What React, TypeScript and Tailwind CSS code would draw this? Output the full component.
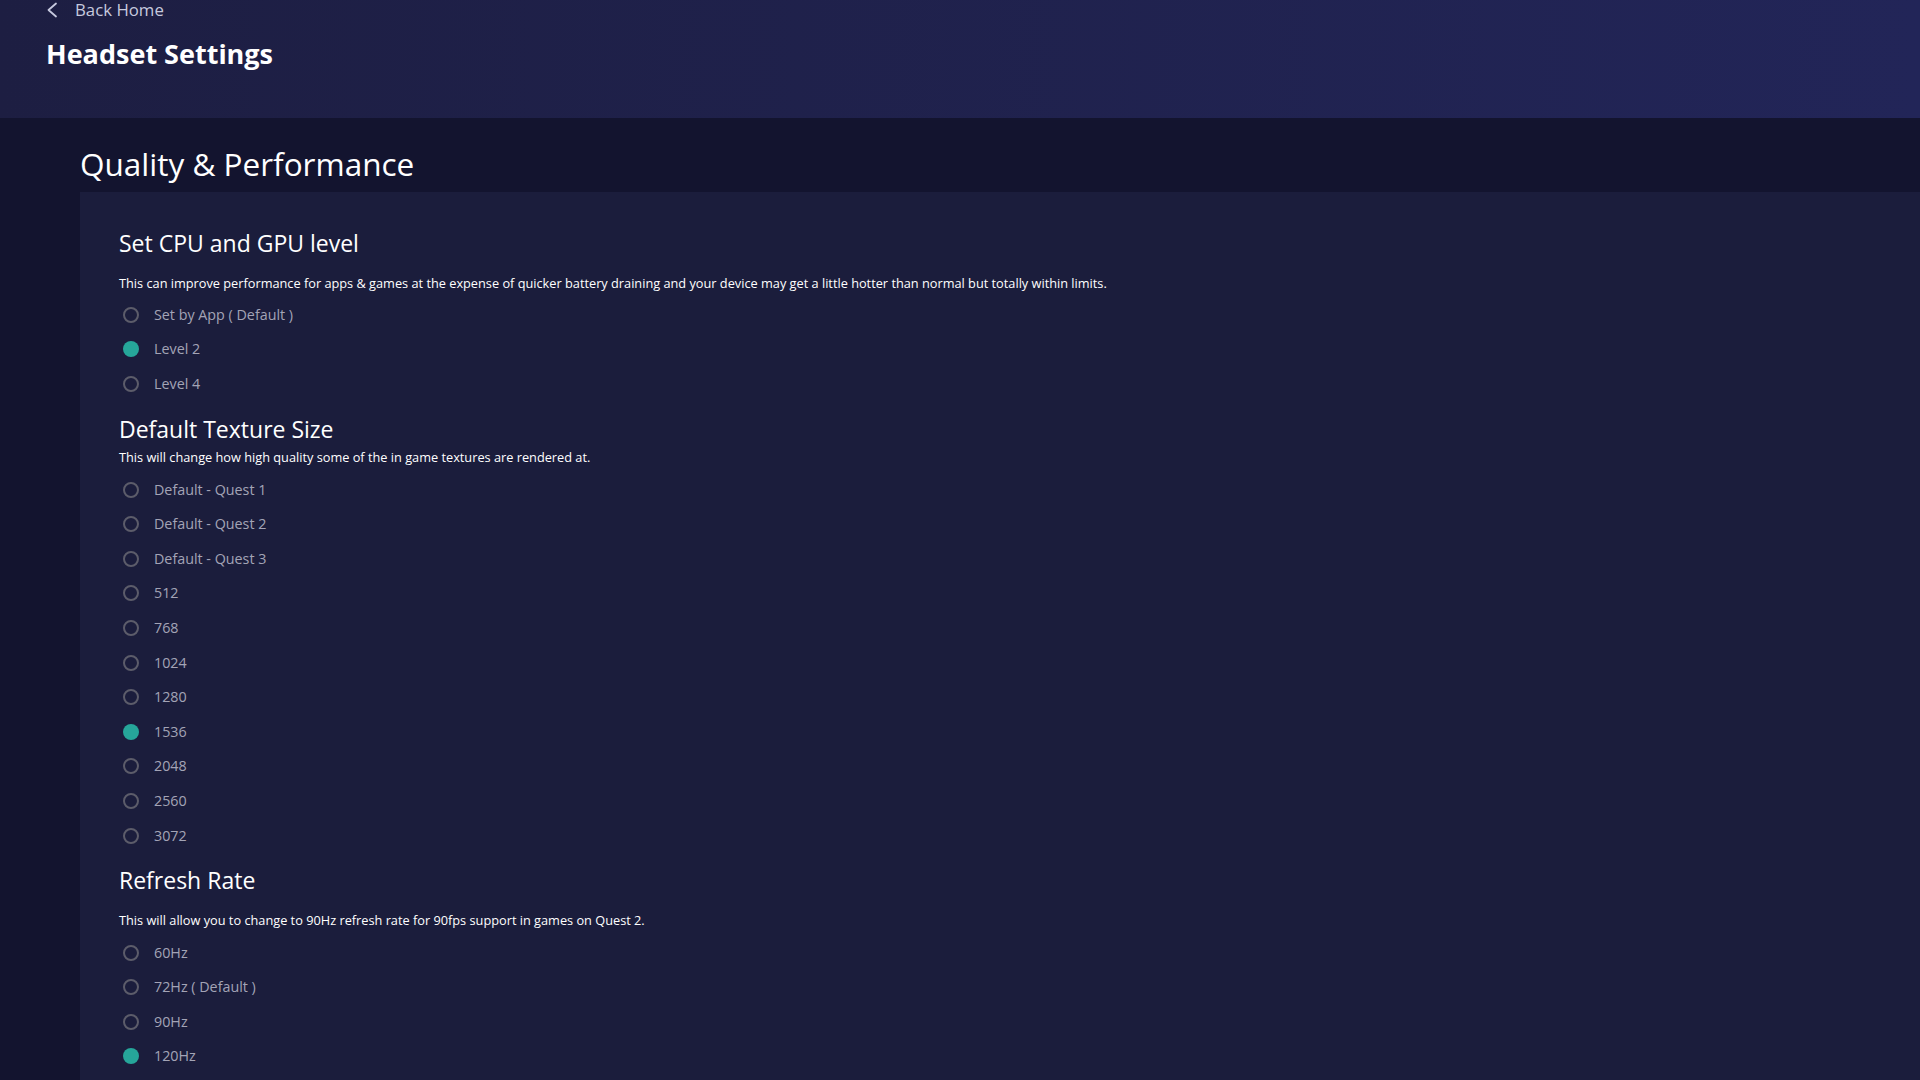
import React from "react";

type Opt = { label: string; checked?: boolean };

function Radio({ label, checked }: Opt) {
  return (
    <div className="flex h-[34.6px] items-center">
      {checked ? (
        <span className="ml-[4px] h-4 w-4 shrink-0 rounded-full bg-[#26a69a]" />
      ) : (
        <span className="ml-[4px] h-4 w-4 shrink-0 rounded-full border-2 border-[#5c5c6a]" />
      )}
      <span className="ml-[15px] text-[14.3px] leading-5 text-[#a3a4b6]">{label}</span>
    </div>
  );
}

function Section({
  title,
  desc,
  options,
  headMt,
  descMt,
}: {
  title: string;
  desc: string;
  options: Opt[];
  headMt: string;
  descMt: string;
}) {
  return (
    <div>
      <h2 className={`${headMt} text-[23px] leading-[28px] text-white`}>{title}</h2>
      <p className={`${descMt} text-[12.75px] leading-[18px] font-medium text-white`}>{desc}</p>
      <div className="mt-[6px] flex flex-col">
        {options.map((o) => (
          <Radio key={o.label} {...o} />
        ))}
      </div>
    </div>
  );
}

export default function App() {
  return (
    <div
      className="flex min-h-screen flex-col bg-[#13142f]"
      style={{ fontFamily: '"Open Sans", "Noto Sans", sans-serif' }}
    >
      <header className="h-[118px] shrink-0 bg-gradient-to-r from-[#1d1e42] to-[#222558] pl-[46px]">
        <div className="flex h-5 items-center text-[#c6c9de]">
          <svg width="12" height="16" viewBox="0 0 12 16" className="mr-[17px]">
            <polyline points="10,1.5 2.5,8 10,14.5" fill="none" stroke="currentColor" strokeWidth="1.8" strokeLinecap="round" strokeLinejoin="round" />
          </svg>
          <span className="text-[16.8px] leading-5">Back Home</span>
        </div>
        <h1 className="mt-[18px] text-[27px] leading-[32px] font-bold text-white">Headset Settings</h1>
      </header>
      <main className="flex flex-1 flex-col pl-[80px]">
        <h1 className="mt-[28px] text-[31.5px] leading-[36px] text-white">Quality &amp; Performance</h1>
        <div className="mt-[10px] flex-1 bg-[#1b1d3c] pb-10 pl-[39px] pt-[37px]">
          <Section
            title="Set CPU and GPU level"
            desc="This can improve performance for apps & games at the expense of quicker battery draining and your device may get a little hotter than normal but totally within limits."
            headMt="mt-0"
            descMt="mt-[16.5px]"
            options={[
              { label: "Set by App ( Default )" },
              { label: "Level 2", checked: true },
              { label: "Level 4" },
            ]}
          />
          <Section
            title="Default Texture Size"
            desc="This will change how high quality some of the in game textures are rendered at."
            headMt="mt-[13.5px]"
            descMt="mt-[5.5px]"
            options={[
              { label: "Default - Quest 1" },
              { label: "Default - Quest 2" },
              { label: "Default - Quest 3" },
              { label: "512" },
              { label: "768" },
              { label: "1024" },
              { label: "1280" },
              { label: "1536", checked: true },
              { label: "2048" },
              { label: "2560" },
              { label: "3072" },
            ]}
          />
          <Section
            title="Refresh Rate"
            desc="This will allow you to change to 90Hz refresh rate for 90fps support in games on Quest 2."
            headMt="mt-[13.5px]"
            descMt="mt-[17px]"
            options={[
              { label: "60Hz" },
              { label: "72Hz ( Default )" },
              { label: "90Hz" },
              { label: "120Hz", checked: true },
            ]}
          />
        </div>
      </main>
    </div>
  );
}
